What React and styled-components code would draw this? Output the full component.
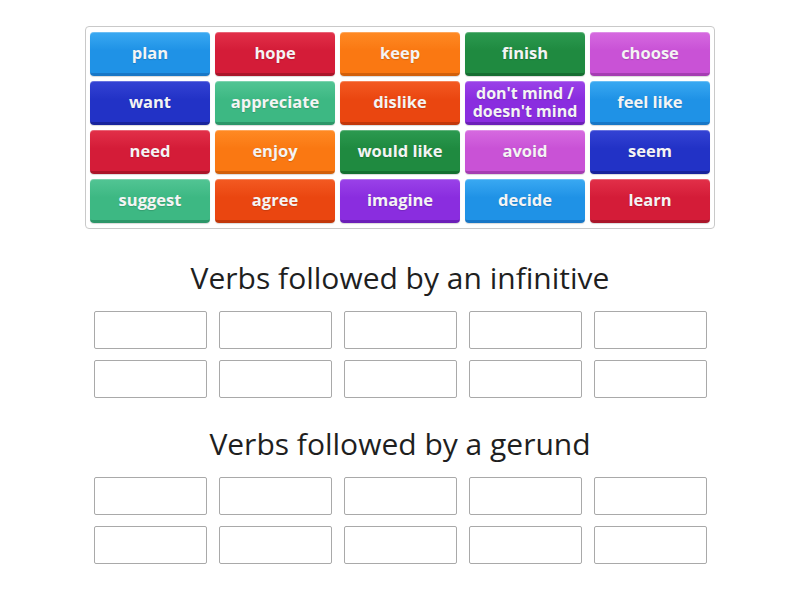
import React from "react";
import styled, { createGlobalStyle } from "styled-components";

const GlobalStyle = createGlobalStyle`
  html, body { margin: 0; padding: 0; background: #ffffff; }
  body { font-family: "Open Sans", "Noto Sans", sans-serif; }
`;

const palette = {
  blue: ["#3aa9f2", "#1f92e6", "#1877c6"],
  red: ["#e23049", "#d41c38", "#aa1529"],
  orange: ["#ff8a24", "#fa7812", "#d2600a"],
  green: ["#2c9a50", "#1f8a40", "#156e31"],
  violet: ["#d66ae0", "#c952d6", "#a53db2"],
  navy: ["#3443d4", "#2232c6", "#18239b"],
  mint: ["#52c594", "#3db883", "#2c9668"],
  flame: ["#f35a22", "#ea4610", "#c2370a"],
  purple: ["#9a42e8", "#8a2ddf", "#6c1fb8"],
};

const tiles = [
  ["plan", "blue"], ["hope", "red"], ["keep", "orange"], ["finish", "green"], ["choose", "violet"],
  ["want", "navy"], ["appreciate", "mint"], ["dislike", "flame"], ["don't mind / doesn't mind", "purple"], ["feel like", "blue"],
  ["need", "red"], ["enjoy", "orange"], ["would like", "green"], ["avoid", "violet"], ["seem", "navy"],
  ["suggest", "mint"], ["agree", "flame"], ["imagine", "purple"], ["decide", "blue"], ["learn", "red"],
];

const Page = styled.div`
  display: flex;
  flex-direction: column;
  align-items: center;
  padding-top: 26px;
`;

const Board = styled.div`
  box-sizing: border-box;
  width: 630px;
  border: 1px solid #c9c9c9;
  border-radius: 4px;
  padding: 5px 4px 5px 4px;
  display: grid;
  grid-template-columns: repeat(5, 120px);
  grid-auto-rows: 44px;
  gap: 5px;
`;

const Tile = styled.div`
  box-sizing: border-box;
  border-radius: 4px;
  background: linear-gradient(180deg, ${(p) => palette[p.$c][0]} 0%, ${(p) => palette[p.$c][1]} 45%, ${(p) => palette[p.$c][1]} 100%);
  border-bottom: 3px solid ${(p) => palette[p.$c][2]};
  box-shadow: inset 0 1px 0 rgba(255, 255, 255, 0.25), 0 1px 1px rgba(0, 0, 0, 0.15);
  display: flex;
  flex-direction: column;
  align-items: center;
  justify-content: center;
  text-align: center;
  color: #f4f4f4;
  font-family: "Open Sans", "Noto Sans", sans-serif;
  font-weight: 700;
  font-size: 16.5px;
  line-height: 20px;
  padding-top: 1px;
  text-shadow: 0 1px 1px rgba(0, 0, 0, 0.15);
`;

const TileLine = styled.span`
  display: block;
  font-size: 16px;
  line-height: 18px;
`;

const Title = styled.h2`
  margin: ${(p) => p.$top}px 0 13px;
  font-family: "Open Sans", "Noto Sans", sans-serif;
  font-weight: 400;
  font-size: 30px;
  line-height: 40px;
  color: #1f1f1f;
`;

const Slots = styled.div`
  display: grid;
  grid-template-columns: repeat(5, 113px);
  grid-auto-rows: 38px;
  column-gap: 12px;
  row-gap: 11px;
`;

const Slot = styled.div`
  box-sizing: border-box;
  border: 1px solid #a9a9a9;
  border-radius: 2px;
  background: #ffffff;
`;

const SlotGroup = ({ count }) => (
  <Slots>
    {Array.from({ length: count }).map((_, i) => (
      <Slot key={i} />
    ))}
  </Slots>
);

export default function App() {
  return (
    <>
      <GlobalStyle />
      <Page>
        <Board>
          {tiles.map(([label, c]) => (
            <Tile key={label} $c={c}>
              {label.includes("/") ? (
                <>
                  <TileLine>don't mind /</TileLine>
                  <TileLine>doesn't mind</TileLine>
                </>
              ) : (
                label
              )}
            </Tile>
          ))}
        </Board>
        <Title $top={29}>Verbs followed by an infinitive</Title>
        <SlotGroup count={10} />
        <Title $top={26}>Verbs followed by a gerund</Title>
        <SlotGroup count={10} />
      </Page>
    </>
  );
}
